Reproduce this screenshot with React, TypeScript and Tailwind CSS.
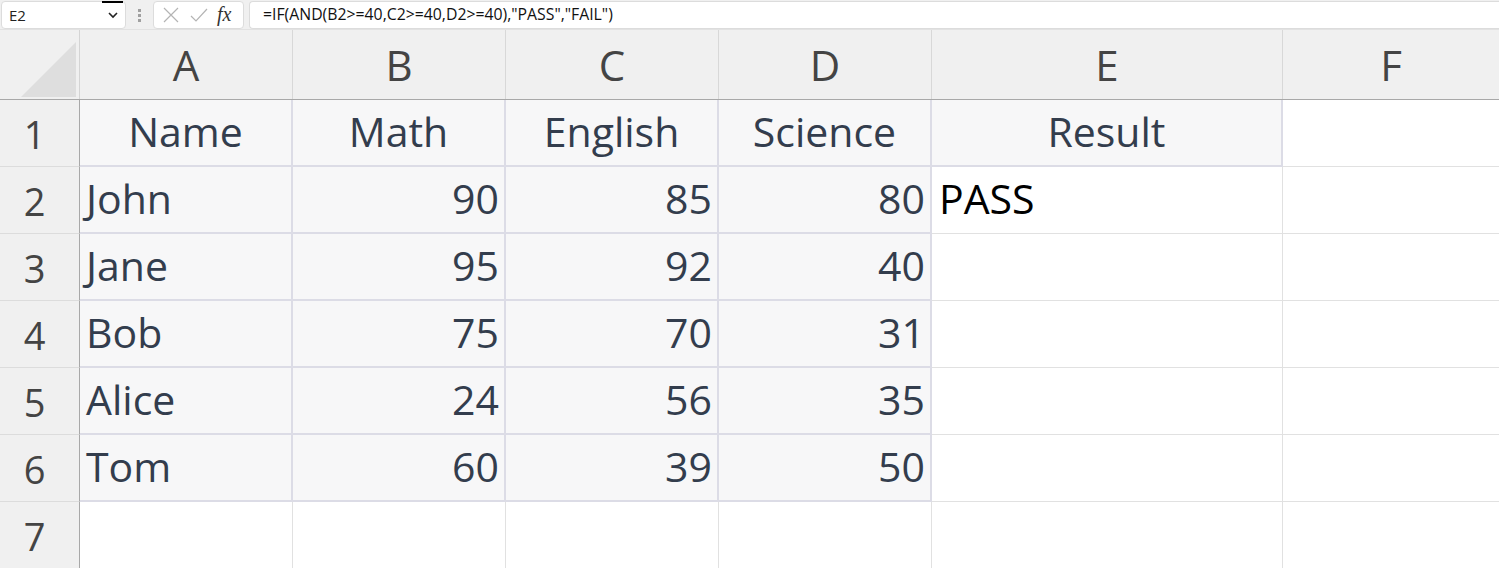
import React from "react";

const cols = ["A", "B", "C", "D", "E", "F"];
const widths = ["w-[213px]", "w-[213px]", "w-[213px]", "w-[213px]", "w-[351px]", "w-[217px]"];

const header = ["Name", "Math", "English", "Science", "Result"];
const data: (string | number)[][] = [
  ["John", 90, 85, 80],
  ["Jane", 95, 92, 40],
  ["Bob", 75, 70, 31],
  ["Alice", 24, 56, 35],
  ["Tom", 60, 39, 50],
];

const font = { fontFamily: '"Open Sans", "Noto Sans", sans-serif' };

function Cell({ ci, ri }: { ci: number; ri: number }) {
  // ri: 0 = row 1 (headers), 1..5 = data, 6 = empty row 7
  const inTable = (ri <= 5 && ci <= 3) || (ri === 0 && ci === 4);
  let content: React.ReactNode = null;
  let align = "justify-start pl-[6px]";
  let color = "text-[#333d4d]";
  if (ri === 0 && ci <= 4) {
    content = header[ci];
    align = "justify-center";
  } else if (ri >= 1 && ri <= 5 && ci <= 3) {
    const v = data[ri - 1][ci];
    content = v;
    if (typeof v === "number") align = "justify-end pr-[5px]";
  } else if (ri === 1 && ci === 4) {
    content = "PASS";
    align = "justify-start pl-[7px]";
    color = "text-black";
  }
  return (
    <div
      className={
        "h-[67px] shrink-0 flex items-center text-[41px] leading-none " +
        widths[ci] +
        " " +
        align +
        " " +
        color +
        " " +
        (ri === 0 ? "font-medium " : "") +
        (inTable
          ? "bg-[#f7f7f8] border-r-2 border-b-2 border-[#dcdce6]"
          : "bg-white border-r border-b border-[#e1e1e1]")
      }
    >
      <span className="-mt-[3px]">{content}</span>
    </div>
  );
}

export default function App() {
  return (
    <div className="w-[1499px] h-[568px] overflow-hidden bg-[#f0f0f0] flex flex-col" style={font}>
      {/* Formula toolbar */}
      <div className="h-[30px] shrink-0 flex items-start pt-[1px] border-b border-[#e2e2e2]">
        <div className="relative ml-[1px] w-[125px] h-[28px] bg-white border border-[#dcdcdc] rounded-[4px] flex items-center justify-between pl-[7px] pr-[6px] text-[15px] text-[#222]">
          <span>E2</span>
          <svg width="12" height="8" viewBox="0 0 12 8">
            <path d="M2 2 L6 6 L10 2" fill="none" stroke="#222" strokeWidth="1.6" />
          </svg>
          <div className="absolute top-[-1px] right-[2px] w-[21px] h-[2px] bg-black" />
        </div>
        <div className="w-[27px] h-[28px] flex flex-col items-center justify-center gap-[2px]">
          <div className="w-[3px] h-[3px] bg-[#a0a0a0]" />
          <div className="w-[3px] h-[3px] bg-[#a0a0a0]" />
          <div className="w-[3px] h-[3px] bg-[#a0a0a0]" />
        </div>
        <div className="w-[91px] h-[28px] bg-white border border-[#dcdcdc] rounded-[4px] flex items-center pl-[7px] gap-[8px]">
          <svg width="20" height="20" viewBox="0 0 20 20">
            <path d="M3 3 L17 17 M17 3 L3 17" stroke="#b4b4b4" strokeWidth="1.2" fill="none" />
          </svg>
          <svg width="20" height="20" viewBox="0 0 20 20">
            <path d="M2 11 L7 16 L18 4" stroke="#b4b4b4" strokeWidth="1.2" fill="none" />
          </svg>
          <span
            className="italic text-[20px] text-[#333] leading-none -mt-[2px]"
            style={{ fontFamily: '"Liberation Serif", serif' }}
          >
            fx
          </span>
        </div>
        <div className="ml-[5px] flex-1 h-[28px] bg-white border border-r-0 border-[#dcdcdc] rounded-l-[4px] flex items-center pl-[13px] text-[15.8px] text-[#111]">
          =IF(AND(B2&gt;=40,C2&gt;=40,D2&gt;=40),"PASS","FAIL")
        </div>
      </div>

      {/* Column headers */}
      <div className="h-[70px] shrink-0 flex border-b border-[#a8a8a8]">
        <div className="w-[80px] shrink-0 border-r border-[#d4d4d4] flex items-end justify-end pr-[3px] pb-[2px]">
          <svg width="55" height="55" viewBox="0 0 55 55">
            <polygon points="55,0 55,55 0,55" fill="#dedede" />
          </svg>
        </div>
        {cols.map((c, i) => (
          <div
            key={c}
            className={
              "shrink-0 flex items-center justify-center text-[42px] text-[#444] leading-none border-r border-[#d8d8d8] " +
              widths[i]
            }
          >
            <span className="mt-[1px]">{c}</span>
          </div>
        ))}
      </div>

      {/* Rows */}
      <div className="flex flex-col">
        {[0, 1, 2, 3, 4, 5, 6].map((ri) => (
          <div key={ri} className="flex">
            <div className="w-[80px] h-[67px] shrink-0 bg-[#f0f0f0] border-r border-b border-r-[#a8a8a8] border-b-[#dcdcdc] flex items-center justify-center text-[38px] text-[#444] leading-none">
              <span className="mt-[1px] -ml-[10px]">{ri + 1}</span>
            </div>
            {cols.map((c, ci) => (
              <Cell key={c} ci={ci} ri={ri} />
            ))}
          </div>
        ))}
      </div>
    </div>
  );
}
